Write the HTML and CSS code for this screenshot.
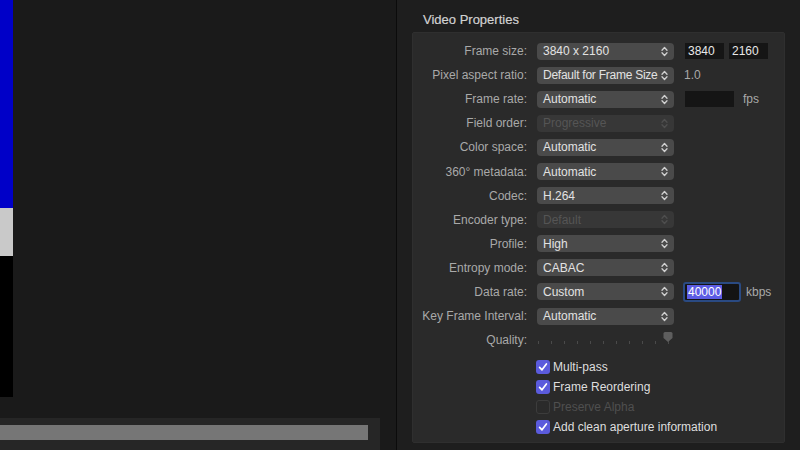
FILE: index.html
```html
<!DOCTYPE html>
<html>
<head>
<meta charset="utf-8">
<link rel="stylesheet" href="styles.css">
</head>
<body>
<div class="app">
  <div class="viewer">
    <div class="canvas">
      <div class="strip">
        <div class="bar-blue"></div>
        <div class="bar-grey"></div>
        <div class="bar-black"></div>
      </div>
    </div>
    <div class="scrubber"><div class="track"></div></div>
  </div>
  <div class="divider"></div>
  <div class="inspector">
    <h2 class="title">Video Properties</h2>
    <div class="group">
      <div class="form">
        <div class="row">
          <span class="label">Frame size:</span>
          <div class="popup"><span>3840 x 2160</span><svg class="chev" width="7" height="11" viewBox="0 0 7 11"><path d="M1 4.2 L3.5 1.5 L6 4.2 M1 6.8 L3.5 9.5 L6 6.8"/></svg></div>
          <div class="extras"><span class="field w39">3840</span><span class="field w39 ml5">2160</span></div>
        </div>
        <div class="row">
          <span class="label">Pixel aspect ratio:</span>
          <div class="popup"><span class="tight">Default for Frame Size</span><svg class="chev" width="7" height="11" viewBox="0 0 7 11"><path d="M1 4.2 L3.5 1.5 L6 4.2 M1 6.8 L3.5 9.5 L6 6.8"/></svg></div>
          <div class="extras"><span class="value">1.0</span></div>
        </div>
        <div class="row">
          <span class="label">Frame rate:</span>
          <div class="popup"><span>Automatic</span><svg class="chev" width="7" height="11" viewBox="0 0 7 11"><path d="M1 4.2 L3.5 1.5 L6 4.2 M1 6.8 L3.5 9.5 L6 6.8"/></svg></div>
          <div class="extras"><span class="field w49"></span><span class="unit">fps</span></div>
        </div>
        <div class="row">
          <span class="label">Field order:</span>
          <div class="popup disabled"><span>Progressive</span><svg class="chev" width="7" height="11" viewBox="0 0 7 11"><path d="M1 4.2 L3.5 1.5 L6 4.2 M1 6.8 L3.5 9.5 L6 6.8"/></svg></div>
        </div>
        <div class="row">
          <span class="label">Color space:</span>
          <div class="popup"><span>Automatic</span><svg class="chev" width="7" height="11" viewBox="0 0 7 11"><path d="M1 4.2 L3.5 1.5 L6 4.2 M1 6.8 L3.5 9.5 L6 6.8"/></svg></div>
        </div>
        <div class="row">
          <span class="label">360° metadata:</span>
          <div class="popup"><span>Automatic</span><svg class="chev" width="7" height="11" viewBox="0 0 7 11"><path d="M1 4.2 L3.5 1.5 L6 4.2 M1 6.8 L3.5 9.5 L6 6.8"/></svg></div>
        </div>
        <div class="row">
          <span class="label">Codec:</span>
          <div class="popup"><span>H.264</span><svg class="chev" width="7" height="11" viewBox="0 0 7 11"><path d="M1 4.2 L3.5 1.5 L6 4.2 M1 6.8 L3.5 9.5 L6 6.8"/></svg></div>
        </div>
        <div class="row">
          <span class="label">Encoder type:</span>
          <div class="popup disabled"><span>Default</span><svg class="chev" width="7" height="11" viewBox="0 0 7 11"><path d="M1 4.2 L3.5 1.5 L6 4.2 M1 6.8 L3.5 9.5 L6 6.8"/></svg></div>
        </div>
        <div class="row">
          <span class="label">Profile:</span>
          <div class="popup"><span>High</span><svg class="chev" width="7" height="11" viewBox="0 0 7 11"><path d="M1 4.2 L3.5 1.5 L6 4.2 M1 6.8 L3.5 9.5 L6 6.8"/></svg></div>
        </div>
        <div class="row">
          <span class="label">Entropy mode:</span>
          <div class="popup"><span>CABAC</span><svg class="chev" width="7" height="11" viewBox="0 0 7 11"><path d="M1 4.2 L3.5 1.5 L6 4.2 M1 6.8 L3.5 9.5 L6 6.8"/></svg></div>
        </div>
        <div class="row">
          <span class="label">Data rate:</span>
          <div class="popup"><span>Custom</span><svg class="chev" width="7" height="11" viewBox="0 0 7 11"><path d="M1 4.2 L3.5 1.5 L6 4.2 M1 6.8 L3.5 9.5 L6 6.8"/></svg></div>
          <div class="extras"><span class="focus-field"><span class="sel">40000</span></span><span class="unit u2">kbps</span></div>
        </div>
        <div class="row">
          <span class="label">Key Frame Interval:</span>
          <div class="popup"><span>Automatic</span><svg class="chev" width="7" height="11" viewBox="0 0 7 11"><path d="M1 4.2 L3.5 1.5 L6 4.2 M1 6.8 L3.5 9.5 L6 6.8"/></svg></div>
        </div>
        <div class="row">
          <span class="label">Quality:</span>
          <svg class="slider" width="140" height="20" viewBox="0 0 140 20">
            <g fill="#4a4a4a">
              <rect x="3" y="11" width="1" height="3"/>
              <rect x="16" y="11" width="1" height="3"/>
              <rect x="29" y="11" width="1" height="3"/>
              <rect x="42" y="11" width="1" height="3"/>
              <rect x="55" y="11" width="1" height="3"/>
              <rect x="68" y="11" width="1" height="3"/>
              <rect x="81" y="11" width="1" height="3"/>
              <rect x="94" y="11" width="1" height="3"/>
              <rect x="107" y="11" width="1" height="3"/>
              <rect x="120" y="11" width="1" height="3"/>
              <rect x="133" y="11" width="1" height="3"/>
            </g>
            <path d="M128.5 3.5 Q128.5 2 130 2 L136 2 Q137.5 2 137.5 3.5 L137.5 8 L133 12 L128.5 8 Z" fill="#5e5e5e"/>
          </svg>
        </div>
      </div>
      <div class="checks">
        <label class="check"><span class="box on"><svg width="14" height="14" viewBox="0 0 14 14"><path d="M3.6 7.3 L6 9.8 L10.4 4"/></svg></span>Multi-pass</label>
        <label class="check"><span class="box on"><svg width="14" height="14" viewBox="0 0 14 14"><path d="M3.6 7.3 L6 9.8 L10.4 4"/></svg></span>Frame Reordering</label>
        <label class="check off"><span class="box"></span>Preserve Alpha</label>
        <label class="check"><span class="box on"><svg width="14" height="14" viewBox="0 0 14 14"><path d="M3.6 7.3 L6 9.8 L10.4 4"/></svg></span>Add clean aperture information</label>
      </div>
    </div>
  </div>
</div>
</body>
</html>
```

FILE: styles.css
```css
* { box-sizing: border-box; }
html, body { margin: 0; padding: 0; }
body {
  width: 800px;
  height: 450px;
  overflow: hidden;
  background: #1d1d1d;
  font-family: "Liberation Sans", Arial, sans-serif;
  font-size: 12px;
}
.app { display: flex; width: 800px; height: 450px; }

.viewer {
  width: 396px;
  height: 450px;
  background: #1a1a1a;
  display: flex;
  flex-direction: column;
}
.canvas { height: 418px; }
.strip { width: 13px; display: flex; flex-direction: column; }
.bar-blue { height: 208px; background: #0000c8; }
.bar-grey { height: 48px; background: #c9c9c9; }
.bar-black { height: 141px; background: #000; }
.scrubber {
  width: 380px;
  height: 32px;
  background: #262626;
  padding-top: 7px;
}
.track { width: 368px; height: 15px; background: #767676; }

.divider { width: 1px; background: #0b0b0b; }

.inspector {
  flex: 1;
  background: #1e1e1e;
  padding-left: 15px;
}
.title {
  margin: 0;
  padding: 12px 0 0 11px;
  font-size: 13px;
  font-weight: normal;
  line-height: 15px;
  color: #d2d2d2;
  -webkit-text-stroke: 0.2px #d2d2d2;
}
.group {
  margin-top: 5px;
  width: 373px;
  height: 411px;
  background: #2a2a2a;
  border: 1px solid #2f2f2f;
  border-radius: 2px;
  padding-top: 6px;
}
.form { display: flex; flex-direction: column; }
.row {
  display: flex;
  align-items: center;
  height: 24.1px;
}
.label {
  width: 114px;
  text-align: right;
  color: #a9a9a9;
  white-space: nowrap;
}
.popup {
  margin-left: 10px;
  width: 137px;
  height: 17px;
  background: #4a4a4a;
  border-radius: 4px;
  display: flex;
  align-items: center;
  justify-content: space-between;
  padding: 0 6px 0 6px;
  color: #e2e2e2;
  white-space: nowrap;
}
.tight { letter-spacing: -0.25px; }
.chev { fill: none; stroke: #d0d0d0; stroke-width: 1.3; stroke-linecap: round; stroke-linejoin: round; flex: none; }
.popup.disabled { background: #373737; color: #555; }
.popup.disabled .chev { stroke: #4e4e4e; }

.extras { display: flex; align-items: center; margin-left: 11px; }
.field {
  height: 16px;
  line-height: 16px;
  background: #151515;
  color: #e8e8e8;
  padding-left: 3px;
}
.w39 { width: 39px; }
.w49 { width: 49px; }
.ml5 { margin-left: 5px; }
.value { color: #a9a9a9; margin-left: -1px; }
.unit { color: #a9a9a9; margin-left: 9px; }
.unit.u2 { margin-left: 5px; }
.focus-field {
  margin-left: -2px;
  width: 58px;
  height: 20px;
  border: 2px solid #2a4a82;
  border-radius: 3px;
  background: #141414;
  display: flex;
  align-items: center;
  padding-left: 2px;
}
.sel {
  background: #5c5ce4;
  color: #fff;
  line-height: 14px;
  padding: 0 1px;
}
.slider { margin-left: 8px; display: block; }

.checks {
  margin-top: 5px;
  padding-left: 123px;
  display: flex;
  flex-direction: column;
}
.check {
  height: 20px;
  display: flex;
  align-items: center;
  color: #dedede;
  white-space: nowrap;
}
.box {
  width: 14px;
  height: 14px;
  border-radius: 3px;
  margin-right: 3px;
  border: 1px solid #3c3c3c;
  flex: none;
  display: flex;
}
.box.on { background: #5b5bdc; border: none; }
.box svg { fill: none; stroke: #fff; stroke-width: 1.7; stroke-linecap: round; stroke-linejoin: round; }
.check.off { color: #4f4f4f; }
```
